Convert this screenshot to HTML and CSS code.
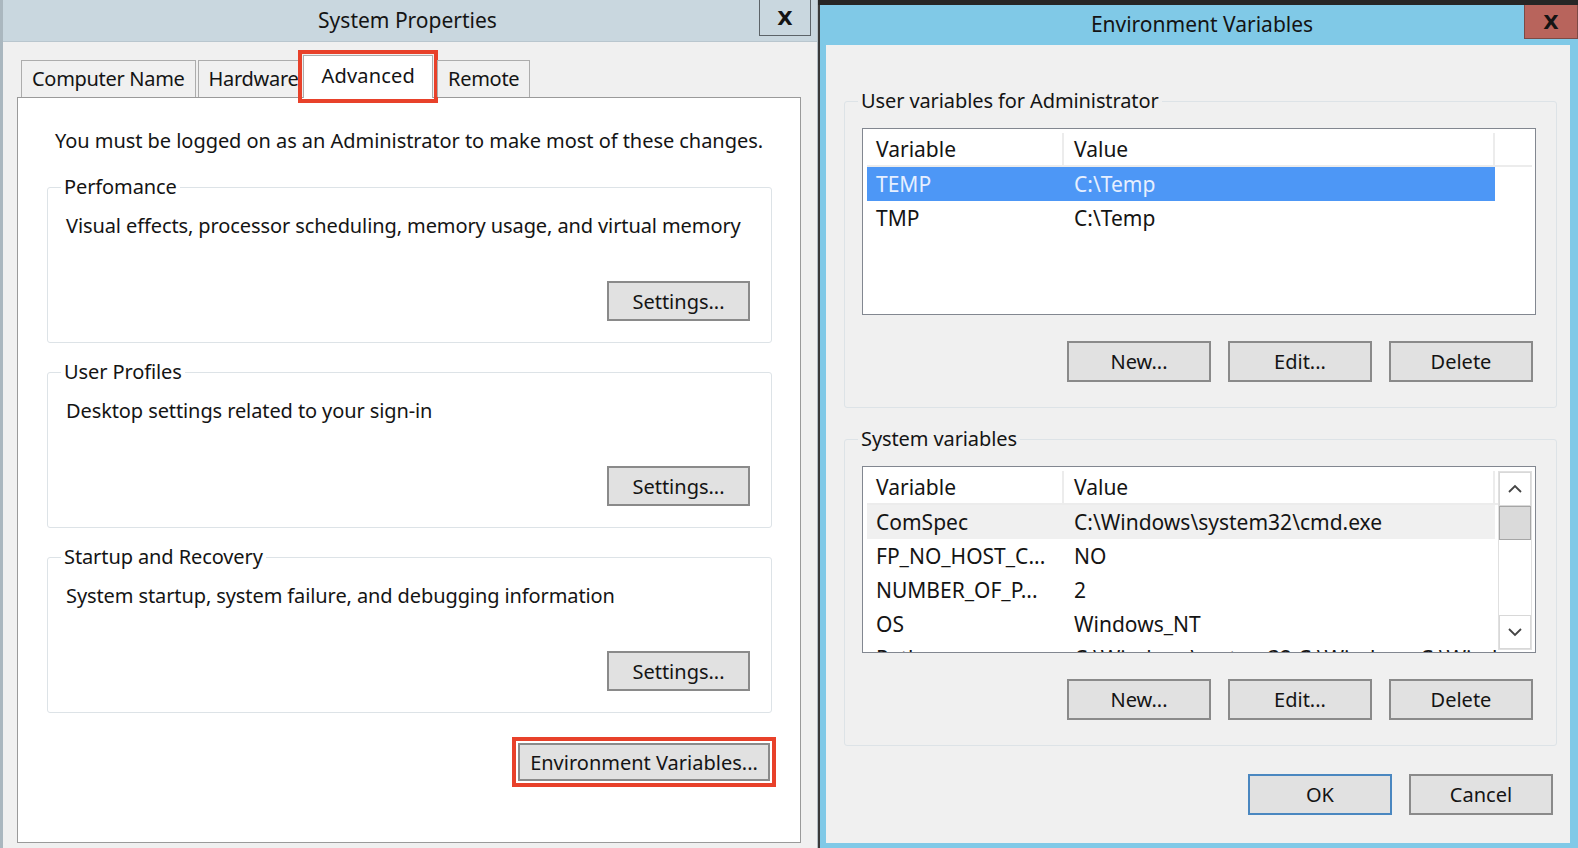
FILE: index.html
```html
<!DOCTYPE html>
<html lang="en">
<head>
    <meta charset="UTF-8">
    <title>System Properties / Environment Variables</title>
    <link rel="stylesheet" href="styles.css">
</head>
<body>
    <div class="desktop">
        <div class="window sysprops">
            <div class="titlebar">
                <span class="title">System Properties</span>
                <button class="close">X</button>
            </div>
            <div class="window-body">
                <div class="tabs">
                    <div class="tab">Computer Name</div>
                    <div class="tab tab-hw">Hardware</div>
                    <div class="tab active marked">Advanced</div>
                    <div class="tab">Remote</div>
                </div>
                <div class="tab-panel">
                    <p class="intro">You must be logged on as an Administrator to make most of these changes.</p>

                    <fieldset class="group">
                        <legend>Perfomance</legend>
                        <p class="desc">Visual effects, processor scheduling, memory usage, and virtual memory</p>
                        <div class="group-actions"><button class="btn">Settings...</button></div>
                    </fieldset>

                    <fieldset class="group">
                        <legend>User Profiles</legend>
                        <p class="desc">Desktop settings related to your sign-in</p>
                        <div class="group-actions"><button class="btn">Settings...</button></div>
                    </fieldset>

                    <fieldset class="group">
                        <legend>Startup and Recovery</legend>
                        <p class="desc">System startup, system failure, and debugging information</p>
                        <div class="group-actions"><button class="btn">Settings...</button></div>
                    </fieldset>

                    <div class="panel-actions">
                        <button class="btn btn-env marked">Environment Variables...</button>
                    </div>
                </div>
            </div>
        </div>

        <div class="window envvars">
            <div class="titlebar">
                <span class="title">Environment Variables</span>
                <button class="close">X</button>
            </div>
            <div class="window-body">
                <fieldset class="group env-group">
                    <legend>User variables for Administrator</legend>
                    <div class="listview">
                        <div class="list-table">
                            <div class="list-head">
                                <span class="col-var">Variable</span>
                                <span class="col-val">Value</span>
                            </div>
                            <div class="list-row selected">
                                <span class="col-var">TEMP</span>
                                <span class="col-val">C:\Temp</span>
                            </div>
                            <div class="list-row">
                                <span class="col-var">TMP</span>
                                <span class="col-val">C:\Temp</span>
                            </div>
                        </div>
                    </div>
                    <div class="env-actions">
                        <button class="btn">New...</button>
                        <button class="btn">Edit...</button>
                        <button class="btn">Delete</button>
                    </div>
                </fieldset>

                <fieldset class="group env-group">
                    <legend>System variables</legend>
                    <div class="listview">
                        <div class="list-table">
                            <div class="list-head">
                                <span class="col-var">Variable</span>
                                <span class="col-val">Value</span>
                            </div>
                            <div class="list-row hover">
                                <span class="col-var">ComSpec</span>
                                <span class="col-val">C:\Windows\system32\cmd.exe</span>
                            </div>
                            <div class="list-row">
                                <span class="col-var">FP_NO_HOST_C...</span>
                                <span class="col-val">NO</span>
                            </div>
                            <div class="list-row">
                                <span class="col-var">NUMBER_OF_P...</span>
                                <span class="col-val">2</span>
                            </div>
                            <div class="list-row">
                                <span class="col-var">OS</span>
                                <span class="col-val">Windows_NT</span>
                            </div>
                            <div class="list-row">
                                <span class="col-var">Path</span>
                                <span class="col-val">C:\Windows\system32;C:\Windows;C:\Windows\System32\Wbem</span>
                            </div>
                        </div>
                        <div class="scrollbar">
                            <div class="scroll-btn">
                                <svg width="16" height="10" viewBox="0 0 16 10"><path d="M2 8 L8 2 L14 8" fill="none" stroke="#444" stroke-width="1.8"/></svg>
                            </div>
                            <div class="scroll-thumb"></div>
                            <div class="scroll-track"></div>
                            <div class="scroll-btn">
                                <svg width="16" height="10" viewBox="0 0 16 10"><path d="M2 2 L8 8 L14 2" fill="none" stroke="#444" stroke-width="1.8"/></svg>
                            </div>
                        </div>
                    </div>
                    <div class="env-actions">
                        <button class="btn">New...</button>
                        <button class="btn">Edit...</button>
                        <button class="btn">Delete</button>
                    </div>
                </fieldset>

                <div class="dialog-actions">
                    <button class="btn btn-default">OK</button>
                    <button class="btn">Cancel</button>
                </div>
            </div>
        </div>
    </div>
</body>
</html>
```

FILE: styles.css
```css
* {
    box-sizing: border-box;
}

body {
    margin: 0;
    background-color: #262626;
    font-family: "Noto Sans", "Open Sans", sans-serif;
    font-size: 20px;
    color: #141414;
}

.desktop {
    display: flex;
    height: 848px;
    overflow: hidden;
}

.window {
    display: flex;
    flex-direction: column;
    background-color: #f0f0f0;
}

.titlebar {
    display: flex;
    align-items: flex-start;
    flex-shrink: 0;
}

.title {
    flex: 1;
    text-align: center;
    font-size: 21px;
}

.close {
    font-family: "DejaVu Sans", sans-serif;
    font-weight: bold;
    font-size: 20px;
    padding: 0;
    cursor: pointer;
}

button {
    font-family: inherit;
    font-size: inherit;
    color: inherit;
}

/* ---- System Properties ---- */

.sysprops {
    flex-shrink: 0;
    width: 818px;
    border-left: 3px solid #aab7bf;
    border-right: 1px solid #b4bec4;
}

.sysprops .titlebar {
    height: 42px;
    background-color: #c9d7df;
    border-bottom: 1px solid #b9c6ce;
}

.sysprops .title {
    padding-left: 53px;
    line-height: 40px;
}

.sysprops .close {
    width: 52px;
    height: 36px;
    margin-right: 6px;
    background-color: #c9d7df;
    border: 1px solid #5c6368;
    border-top: none;
}

.sysprops .window-body {
    flex: 1;
    padding: 13px 0 0 14px;
}

.tabs {
    display: flex;
    align-items: flex-end;
    padding-left: 4px;
    position: relative;
    z-index: 1;
}

.tab {
    height: 37px;
    line-height: 36px;
    padding: 0 10px;
    border: 1px solid #acacac;
    border-bottom: none;
    background-color: #f0f0f0;
    margin-right: 2px;
    letter-spacing: -0.3px;
}

.tab-hw {
    padding-right: 2px;
    margin-right: 2px;
}

.tab.active {
    height: 43px;
    line-height: 40px;
    background-color: #fff;
    margin-bottom: -1px;
    padding: 0 17px;
    margin-right: 4px;
    letter-spacing: 0.2px;
}

.marked {
    outline: 4px solid #e8412a;
    outline-offset: 1px;
}

.tab-panel {
    width: 784px;
    height: 746px;
    background-color: #fff;
    border: 1px solid #9a9a9a;
    padding: 31px 30px 0 29px;
}

.intro {
    margin: 0 0 20px 8px;
    line-height: 24px;
    letter-spacing: -0.05px;
}

.group {
    margin: 0 -2px 15px 0;
    border: 1px solid #dde3e7;
    border-radius: 3px;
    padding: 13px 21px 21px 18px;
}

.group legend {
    margin-left: -5px;
    padding: 0 3px;
    line-height: 28px;
    letter-spacing: -0.1px;
}

.desc {
    margin: 0;
    line-height: 24px;
    letter-spacing: -0.1px;
}

.group-actions {
    display: flex;
    justify-content: flex-end;
    margin-top: 43px;
}

.btn {
    width: 143px;
    height: 40px;
    background-color: #e1e1e1;
    border: 2px solid #8a8a8a;
    padding: 0;
    cursor: pointer;
}

.panel-actions {
    display: flex;
    justify-content: flex-end;
    margin-top: 30px;
}

.btn-env {
    width: 252px;
    height: 38px;
    outline-offset: 2px;
}

/* ---- Environment Variables ---- */

.envvars {
    flex: 1;
    min-width: 0;
    margin-top: 5px;
    border-left: 2px solid #3a3a3a;
}

.envvars .titlebar {
    height: 40px;
    background-color: #80c9e7;
    border-left: 6px solid #80c9e7;
}

.envvars .title {
    padding-left: 54px;
    line-height: 38px;
}

.envvars .close {
    width: 54px;
    height: 34px;
    background-color: #b8645c;
    border: 1px solid #7c4a45;
    border-top: none;
}

.envvars .window-body {
    flex: 1;
    border-left: 6px solid #80c9e7;
    border-right: 8px solid #80c9e7;
    border-bottom: 5px solid #80c9e7;
    padding: 42px 15px 0 18px;
}

.env-group {
    margin-bottom: 17px;
    padding: 13px 20px 25px 17px;
}

.env-group legend {
    margin-left: -4px;
}

.listview {
    display: flex;
    height: 187px;
    background-color: #fff;
    border: 1px solid #828790;
    padding: 4px 3px 0 4px;
    overflow: hidden;
}

.list-table {
    flex: 1;
    min-width: 0;
}

.list-head,
.list-row {
    display: flex;
    width: 628px;
    height: 34px;
    align-items: center;
    font-size: 21px;
}

.list-head {
    border-bottom: 2px solid #ececec;
    width: auto;
}

.list-head span {
    height: 100%;
    display: flex;
    align-items: center;
    border-right: 2px solid #ececec;
}

.list-head .col-val {
    width: 431px;
}

.col-var {
    width: 197px;
    padding-left: 9px;
    white-space: nowrap;
    flex-shrink: 0;
}

.col-val {
    padding-left: 10px;
    white-space: nowrap;
}

.list-row.selected {
    background-color: #4d97f6;
    color: #e6efff;
}

.list-row.hover {
    background-color: #f0f0f0;
}

.scrollbar {
    width: 34px;
    flex-shrink: 0;
    height: 179px;
    display: flex;
    flex-direction: column;
    border: 1px solid #e0e0e0;
}

.scroll-btn {
    height: 34px;
    display: flex;
    align-items: center;
    justify-content: center;
    border: 1px solid #d8d8d8;
}

.scroll-thumb {
    height: 34px;
    background-color: #dadada;
    border: 1px solid #a6a6a6;
}

.scroll-track {
    flex: 1;
}

.env-actions {
    display: flex;
    justify-content: flex-end;
    gap: 17px;
    margin-top: 26px;
    padding-right: 3px;
}

.env-actions .btn {
    width: 144px;
    height: 41px;
}

.dialog-actions {
    display: flex;
    justify-content: flex-end;
    gap: 17px;
    margin-top: 28px;
    padding-right: 2px;
}

.dialog-actions .btn {
    width: 144px;
    height: 41px;
}

.btn-default {
    border-color: #4a87c0;
}
```
